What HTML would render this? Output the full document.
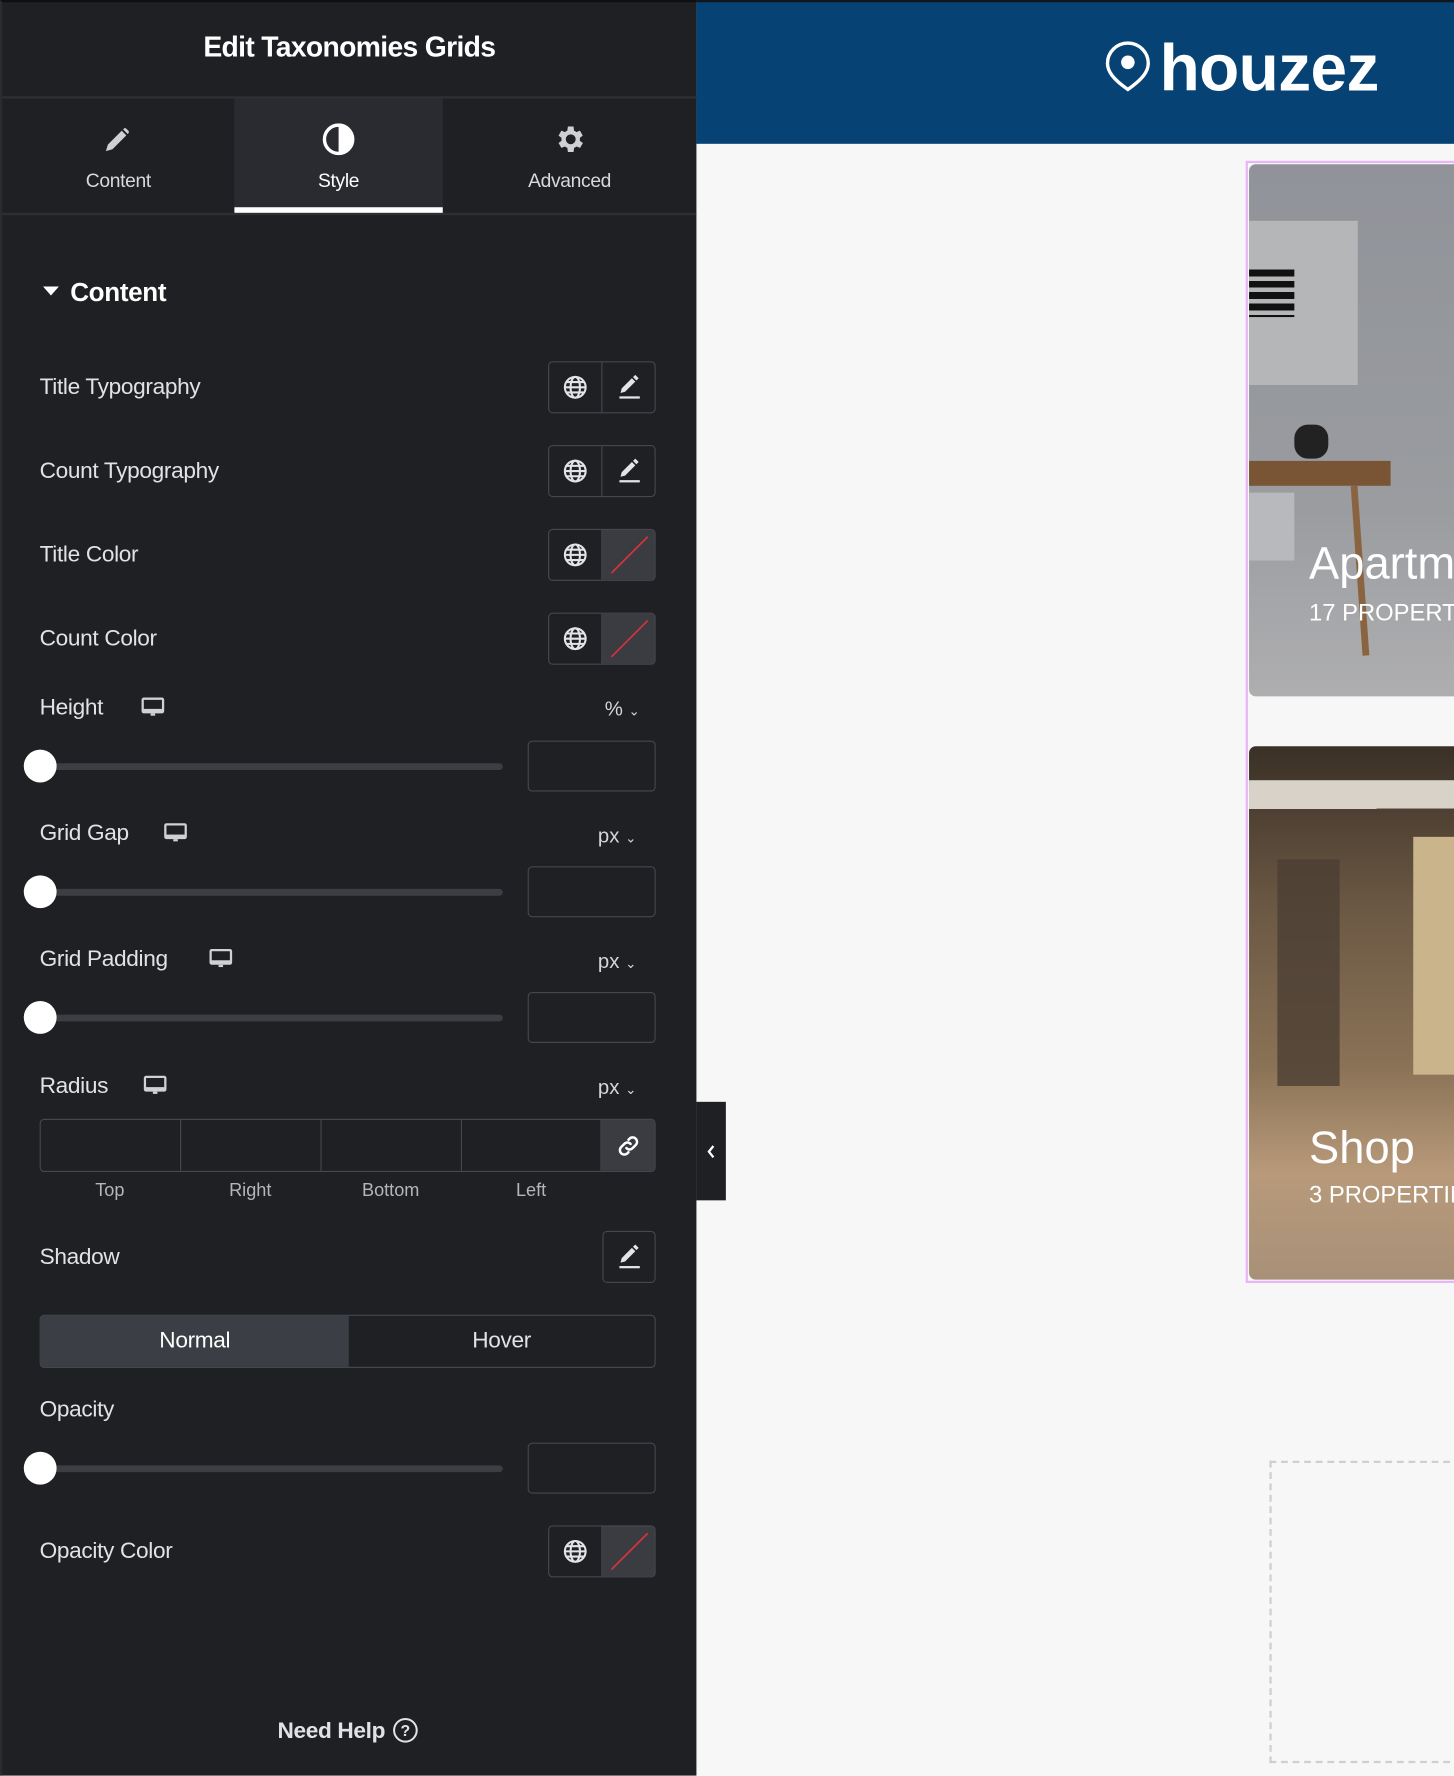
<!DOCTYPE html>
<html><head><meta charset="utf-8"><style>
*{box-sizing:border-box;margin:0;padding:0}
html,body{width:1454px;height:1776px;overflow:hidden;background:#f7f7f7;font-family:"Liberation Sans",Arial,sans-serif}
#s{position:absolute;left:0;top:0;width:1284px;height:1568px;transform:scale(1.13240);transform-origin:0 0;background:#f7f7f7}
.a{position:absolute}
#panel{left:0;top:0;width:615px;height:1568px;background:#1f2024;border-top:2px solid #0e0f11;border-left:2px solid #2a2b2f}
.t{color:#e1e2e4;font-size:20px;letter-spacing:-0.3px;white-space:nowrap}
.ln{background:#2e2f33;height:2px}
.bx{border:1px solid #45474d;border-radius:4px}
.btn2{width:95px;height:46px;border:1px solid #45474d;border-radius:4px;overflow:hidden}
.btn2 .h{position:absolute;top:0;height:100%;width:47px;display:flex;align-items:center;justify-content:center}
.track{left:33px;width:409px;height:6px;border-radius:3px;background:#3c3e44}
.knob{width:29px;height:29px;border-radius:50%;background:#fff}
.inp{left:464px;width:113px;height:45px}
.unit{color:#d5d6d8;font-size:18px}
.lbl{color:#b5b6b9;font-size:16px;text-align:center;width:124px}
</style></head><body><div id="s">
<div class="a" id="panel">
 <div class="a t" style="left:0;width:613px;top:26px;text-align:center;font-weight:bold;font-size:25px;color:#fff;letter-spacing:-0.6px">Edit Taxonomies Grids</div>
 <div class="a ln" style="left:0;top:83px;width:613px"></div>
 <div class="a" style="left:205px;top:85px;width:184px;height:101px;background:#2a2b30"></div>
 <div class="a" style="left:205px;top:181px;width:184px;height:5px;background:#fff"></div>
 <div class="a ln" style="left:0;top:186px;width:613px"></div>
 <svg class="a" style="left:88px;top:107px" width="28" height="28" viewBox="0 0 24 24"><path d="M3 21l1.5-5L16 4.5l3.5 3.5L8 19.5z M15 5.5l3.5 3.5 1.5-1.5a1.5 1.5 0 000-2l-1.5-1.5a1.5 1.5 0 00-2 0z" fill="#cfd0d3"/></svg>
 <div class="a t" style="left:0;width:205px;top:148px;text-align:center;font-size:17px;color:#d8d9db">Content</div>
 <svg class="a" style="left:282px;top:106px" width="30" height="30" viewBox="0 0 24 24"><circle cx="12" cy="12" r="10" fill="none" stroke="#fff" stroke-width="2.4"/><path d="M12 2a10 10 0 010 20z" fill="#fff"/></svg>
 <div class="a t" style="left:205px;width:184px;top:148px;text-align:center;font-size:17px;color:#fff">Style</div>
 <svg class="a" style="left:487px;top:106px" width="30" height="30" viewBox="0 0 24 24"><path fill="#cfd0d3" d="M19.4 13a7.5 7.5 0 000-2l2.1-1.6-2-3.5-2.5 1a7.6 7.6 0 00-1.7-1L15 3h-4l-.4 2.9a7.6 7.6 0 00-1.7 1l-2.5-1-2 3.5L6.5 11a7.5 7.5 0 000 2l-2.1 1.6 2 3.5 2.5-1a7.6 7.6 0 001.7 1L11 21h4l.4-2.9a7.6 7.6 0 001.7-1l2.5 1 2-3.5zM13 15.5a3.5 3.5 0 110-7 3.5 3.5 0 010 7z" transform="translate(-1 0)"/></svg>
 <div class="a t" style="left:389px;width:224px;top:148px;text-align:center;font-size:17px;color:#d8d9db">Advanced</div>

 <svg class="a" style="left:36px;top:251px" width="14" height="10"><path d="M0 0h14L7 8z" fill="#fff"/></svg>
 <div class="a t" style="left:60px;top:243px;font-weight:bold;font-size:23px;color:#fff">Content</div>

 <div class="a t" style="left:33px;top:329px">Title Typography</div>
 <div class="a t" style="left:33px;top:403px">Count Typography</div>
 <div class="a t" style="left:33px;top:477px">Title Color</div>
 <div class="a t" style="left:33px;top:551px">Count Color</div>

 <div class="a btn2" style="left:482px;top:317px"><div class="h" style="left:0;border-right:1px solid #45474d"><svg width="22" height="22" viewBox="0 0 24 24" fill="none" stroke="#e3e4e6" stroke-width="2"><circle cx="12" cy="12" r="10"/><ellipse cx="12" cy="12" rx="4.5" ry="10"/><path d="M2 12h20M4 7h16M4 17h16"/></svg></div><div class="h" style="left:47px"><svg width="24" height="24" viewBox="0 0 24 24"><path d="M4 17l1-4 9-9 3 3-9 9z M15 3l2-2 3 3-2 2z" fill="#e3e4e6"/><rect x="3" y="20" width="18" height="2" fill="#e3e4e6"/></svg></div></div>
 <div class="a btn2" style="left:482px;top:391px"><div class="h" style="left:0;border-right:1px solid #45474d"><svg width="22" height="22" viewBox="0 0 24 24" fill="none" stroke="#e3e4e6" stroke-width="2"><circle cx="12" cy="12" r="10"/><ellipse cx="12" cy="12" rx="4.5" ry="10"/><path d="M2 12h20M4 7h16M4 17h16"/></svg></div><div class="h" style="left:47px"><svg width="24" height="24" viewBox="0 0 24 24"><path d="M4 17l1-4 9-9 3 3-9 9z M15 3l2-2 3 3-2 2z" fill="#e3e4e6"/><rect x="3" y="20" width="18" height="2" fill="#e3e4e6"/></svg></div></div>
 <div class="a btn2" style="left:482px;top:465px"><div class="h" style="left:0;border-right:1px solid #45474d"><svg width="22" height="22" viewBox="0 0 24 24" fill="none" stroke="#e3e4e6" stroke-width="2"><circle cx="12" cy="12" r="10"/><ellipse cx="12" cy="12" rx="4.5" ry="10"/><path d="M2 12h20M4 7h16M4 17h16"/></svg></div><div class="h" style="left:47px;width:48px;background:#3a3c42"><svg width="46" height="46"><path d="M7 39L39 7" stroke="#d2343c" stroke-width="1.5"/></svg></div></div>
 <div class="a btn2" style="left:482px;top:539px"><div class="h" style="left:0;border-right:1px solid #45474d"><svg width="22" height="22" viewBox="0 0 24 24" fill="none" stroke="#e3e4e6" stroke-width="2"><circle cx="12" cy="12" r="10"/><ellipse cx="12" cy="12" rx="4.5" ry="10"/><path d="M2 12h20M4 7h16M4 17h16"/></svg></div><div class="h" style="left:47px;width:48px;background:#3a3c42"><svg width="46" height="46"><path d="M7 39L39 7" stroke="#d2343c" stroke-width="1.5"/></svg></div></div>

 <div class="a t" style="left:33px;top:612px">Height</div>
 <svg class="a" style="left:122px;top:613px" width="22" height="20" viewBox="0 0 22 20"><rect x="2" y="2" width="18" height="12" rx="1" fill="none" stroke="#d0d1d4" stroke-width="2"/><rect x="2" y="11" width="18" height="3" fill="#d0d1d4"/><rect x="9" y="15" width="4" height="2" fill="#d0d1d4"/></svg>
 <div class="a unit" style="left:532px;top:614px">% <span style="font-size:12px">&#8964;</span></div>
 <div class="a track" style="top:672px"></div><div class="a knob" style="left:19px;top:660px"></div>
 <div class="a inp bx" style="top:652px"></div>

 <div class="a t" style="left:33px;top:723px">Grid Gap</div>
 <svg class="a" style="left:142px;top:724px" width="22" height="20" viewBox="0 0 22 20"><rect x="2" y="2" width="18" height="12" rx="1" fill="none" stroke="#d0d1d4" stroke-width="2"/><rect x="2" y="11" width="18" height="3" fill="#d0d1d4"/><rect x="9" y="15" width="4" height="2" fill="#d0d1d4"/></svg>
 <div class="a unit" style="left:526px;top:726px">px <span style="font-size:12px">&#8964;</span></div>
 <div class="a track" style="top:783px"></div><div class="a knob" style="left:19px;top:771px"></div>
 <div class="a inp bx" style="top:763px"></div>

 <div class="a t" style="left:33px;top:834px">Grid Padding</div>
 <svg class="a" style="left:182px;top:835px" width="22" height="20" viewBox="0 0 22 20"><rect x="2" y="2" width="18" height="12" rx="1" fill="none" stroke="#d0d1d4" stroke-width="2"/><rect x="2" y="11" width="18" height="3" fill="#d0d1d4"/><rect x="9" y="15" width="4" height="2" fill="#d0d1d4"/></svg>
 <div class="a unit" style="left:526px;top:837px">px <span style="font-size:12px">&#8964;</span></div>
 <div class="a track" style="top:894px"></div><div class="a knob" style="left:19px;top:882px"></div>
 <div class="a inp bx" style="top:874px"></div>

 <div class="a t" style="left:33px;top:946px">Radius</div>
 <svg class="a" style="left:124px;top:947px" width="22" height="20" viewBox="0 0 22 20"><rect x="2" y="2" width="18" height="12" rx="1" fill="none" stroke="#d0d1d4" stroke-width="2"/><rect x="2" y="11" width="18" height="3" fill="#d0d1d4"/><rect x="9" y="15" width="4" height="2" fill="#d0d1d4"/></svg>
 <div class="a unit" style="left:526px;top:948px">px <span style="font-size:12px">&#8964;</span></div>
 <div class="a bx" style="left:33px;top:986px;width:544px;height:47px;overflow:hidden">
  <div class="a" style="left:123px;top:0;width:1px;height:100%;background:#45474d"></div>
  <div class="a" style="left:247px;top:0;width:1px;height:100%;background:#45474d"></div>
  <div class="a" style="left:371px;top:0;width:1px;height:100%;background:#45474d"></div>
  <div class="a" style="left:494px;top:0;width:50px;height:100%;background:#3a3c42;display:flex;align-items:center;justify-content:center"><svg width="22" height="22" viewBox="0 0 24 24" fill="none" stroke="#fff" stroke-width="2.4" stroke-linecap="round"><path d="M10 14a4 4 0 006 0l3-3a4 4 0 00-6-6l-1 1"/><path d="M14 10a4 4 0 00-6 0l-3 3a4 4 0 006 6l1-1"/></svg></div>
 </div>
 <div class="a lbl" style="left:33px;top:1041px">Top</div>
 <div class="a lbl" style="left:157px;top:1041px">Right</div>
 <div class="a lbl" style="left:281px;top:1041px">Bottom</div>
 <div class="a lbl" style="left:405px;top:1041px">Left</div>

 <div class="a t" style="left:33px;top:1097px">Shadow</div>
 <div class="a bx" style="left:530px;top:1085px;width:47px;height:46px;display:flex;align-items:center;justify-content:center"><svg width="24" height="24" viewBox="0 0 24 24"><path d="M4 17l1-4 9-9 3 3-9 9z M15 3l2-2 3 3-2 2z" fill="#e3e4e6"/><rect x="3" y="20" width="18" height="2" fill="#e3e4e6"/></svg></div>

 <div class="a bx" style="left:33px;top:1159px;width:544px;height:47px;overflow:hidden">
  <div class="a" style="left:0;top:0;width:272px;height:100%;background:#3b3e45"></div>
  <div class="a t" style="left:0;width:272px;top:11px;text-align:center;color:#fff">Normal</div>
  <div class="a t" style="left:272px;width:270px;top:11px;text-align:center">Hover</div>
 </div>

 <div class="a t" style="left:33px;top:1232px">Opacity</div>
 <div class="a track" style="top:1292px"></div><div class="a knob" style="left:19px;top:1280px"></div>
 <div class="a inp bx" style="top:1272px"></div>

 <div class="a t" style="left:33px;top:1357px">Opacity Color</div>
 <div class="a btn2" style="left:482px;top:1345px"><div class="h" style="left:0;border-right:1px solid #45474d"><svg width="22" height="22" viewBox="0 0 24 24" fill="none" stroke="#e3e4e6" stroke-width="2"><circle cx="12" cy="12" r="10"/><ellipse cx="12" cy="12" rx="4.5" ry="10"/><path d="M2 12h20M4 7h16M4 17h16"/></svg></div><div class="h" style="left:47px;width:48px;background:#3a3c42"><svg width="46" height="46"><path d="M7 39L39 7" stroke="#d2343c" stroke-width="1.5"/></svg></div></div>

 <div class="a t" style="left:243px;top:1516px;font-weight:bold;color:#e1e2e4">Need Help</div>
 <svg class="a" style="left:344px;top:1514px" width="24" height="24" viewBox="0 0 24 24"><circle cx="12" cy="12" r="10" fill="none" stroke="#e1e2e4" stroke-width="1.8"/><text x="12" y="17" text-anchor="middle" font-size="14" font-weight="bold" fill="#e1e2e4" font-family="Liberation Sans">?</text></svg>
</div>
<div class="a" style="left:615px;top:973px;width:26px;height:87px;background:#1f2024;display:flex;align-items:center;justify-content:center"><svg width="10" height="14"><path d="M7 2L3 7l4 5" stroke="#fff" stroke-width="2" fill="none"/></svg></div>

<div class="a" style="left:615px;top:0;width:669px;height:127px;background:#064273;border-top:2px solid #0e1620"></div>
<svg class="a" style="left:975px;top:36px" width="42" height="46" viewBox="0 0 42 46"><path d="M21 43C8 34 3 27 3 20a18 18 0 0136 0c0 7-5 14-18 23z" fill="none" stroke="#fff" stroke-width="3"/><circle cx="21" cy="19" r="6" fill="#fff"/></svg>
<div class="a" style="left:1024px;top:26px;font-size:58px;font-weight:bold;color:#fff;letter-spacing:-0.5px;line-height:70px">houzez</div>

<div class="a" style="left:1100px;top:142px;width:190px;height:991px;border:2px solid #e8b6f6"></div>
<div class="a" style="left:1103px;top:145px;width:190px;height:470px;border-radius:6px;overflow:hidden;background:linear-gradient(180deg,#909399 0%,#9a9ca0 65%,#a4a5a8 80%,#aeaeb0 100%)">
 <div class="a" style="left:0;top:50px;width:96px;height:145px;background:#b5b6b8"></div>
 <div class="a" style="left:0;top:93px;width:40px;height:42px;background:repeating-linear-gradient(180deg,#111 0 6px,#b5b6b8 6px 10px)"></div>
 <div class="a" style="left:40px;top:230px;width:30px;height:30px;background:#222;border-radius:40%"></div>
 <div class="a" style="left:0;top:262px;width:125px;height:22px;background:#7a5535"></div>
 <div class="a" style="left:95px;top:284px;width:6px;height:150px;background:#8a6440;transform:rotate(-4deg)"></div>
 <div class="a" style="left:0;top:290px;width:40px;height:60px;background:#b7b9bc"></div>
</div>
<div class="a" style="left:1156px;top:474px;font-size:40px;color:#fff;white-space:nowrap;line-height:48px">Apartment</div>
<div class="a" style="left:1156px;top:530px;font-size:21px;color:#fff;white-space:nowrap">17 PROPERTIES</div>

<div class="a" style="left:1103px;top:659px;width:190px;height:471px;border-radius:6px;overflow:hidden;background:linear-gradient(180deg,#3a3026 0%,#6b5844 30%,#8a7256 60%,#b89a7a 80%,#a89078 100%)">
 <div class="a" style="left:0;top:30px;width:190px;height:25px;background:#d8d2c8"></div>
 <div class="a" style="left:25px;top:100px;width:55px;height:200px;background:#4b3f33;opacity:.8"></div>
 <div class="a" style="left:145px;top:80px;width:45px;height:210px;background:#c9b48c"></div>
</div>
<div class="a" style="left:1156px;top:990px;font-size:40px;color:#fff;line-height:48px">Shop</div>
<div class="a" style="left:1156px;top:1044px;font-size:21px;color:#fff;white-space:nowrap">3 PROPERTIES</div>

<div class="a" style="left:1121px;top:1290px;width:180px;height:267px;border:2px dashed #cfcfcf"></div>
</div></body></html>
